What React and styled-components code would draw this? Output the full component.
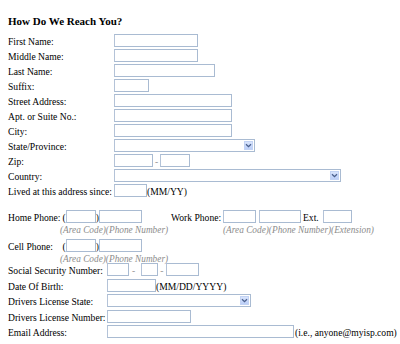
import React from "react";
import styled, { createGlobalStyle } from "styled-components";

const GlobalStyle = createGlobalStyle`
  body {
    margin: 0;
    background: #fff;
    font-family: "Liberation Serif", "Times New Roman", serif;
    color: #000;
  }
`;

const Page = styled.div`
  padding: 14px 8px 0 8px;
  width: 400px;
  box-sizing: border-box;
`;

const Heading = styled.h2`
  margin: 0;
  font-size: 11px;
  line-height: 14px;
  font-weight: bold;
`;

const Section = styled.div`
  display: flex;
  flex-direction: column;
  margin-top: ${(p) => p.$top || 0}px;
`;

const Row = styled.div`
  display: flex;
  align-items: flex-start;
  height: ${(p) => p.$h || 15}px;
`;

const Label = styled.div`
  width: ${(p) => p.$w}px;
  flex-shrink: 0;
  font-size: 9.6px;
  line-height: 15px;
  padding-top: 1px;
  white-space: nowrap;
`;

const Text = styled.span`
  font-size: 9.6px;
  line-height: 15px;
  padding-top: 1px;
  margin-left: ${(p) => p.$ml || 0}px;
  margin-right: ${(p) => p.$mr || 0}px;
  color: ${(p) => (p.$muted ? "#999" : "#000")};
  white-space: nowrap;
`;

const Input = styled.div`
  box-sizing: border-box;
  width: ${(p) => p.$w}px;
  height: 13px;
  margin-top: 1px;
  flex-shrink: 0;
  border: 1px solid #a9bbd2;
  border-left-color: #b4c3d8;
  background: #fff;
`;

const SelectBox = styled(Input)`
  display: flex;
  justify-content: flex-end;
  align-items: center;
  padding-right: 1px;
`;

const SelectButton = styled.div`
  width: 9px;
  height: 9px;
  background: linear-gradient(#d8e4fc, #bccff8);
  border: 1px solid #c3d3f4;
  box-sizing: border-box;
  display: flex;
  align-items: center;
  justify-content: center;
`;

const PhoneGrid = styled.div`
  display: grid;
  grid-template-columns: 52px 111px 52px auto;
  margin-top: 11px;
`;

const Cell = styled.div`
  display: flex;
  align-items: flex-start;
  grid-column: ${(p) => p.$col};
  height: ${(p) => p.$h || 15}px;
  margin-bottom: ${(p) => p.$mb || 0}px;
`;

const Hint = styled.div`
  font-size: 9.3px;
  line-height: 10px;
  font-style: italic;
  color: #8c8c8c;
  white-space: nowrap;
  margin-top: 1px;
`;

function Select({ w }) {
  return (
    <SelectBox $w={w}>
      <SelectButton>
        <svg width="7" height="5" viewBox="0 0 7 5">
          <path d="M1 1.2 L3.5 3.6 L6 1.2" fill="none" stroke="#4a5f8c" strokeWidth="1.3" />
        </svg>
      </SelectButton>
    </SelectBox>
  );
}

const addressFields = [
  { label: "First Name:", w: 84 },
  { label: "Middle Name:", w: 84 },
  { label: "Last Name:", w: 101 },
  { label: "Suffix:", w: 35 },
  { label: "Street Address:", w: 118 },
  { label: "Apt. or Suite No.:", w: 118 },
  { label: "City:", w: 118 },
];

export default function App() {
  return (
    <Page>
      <GlobalStyle />
      <Heading>How Do We Reach You?</Heading>

      <Section $top={5}>
        {addressFields.map((f) => (
          <Row key={f.label}>
            <Label $w={106}>{f.label}</Label>
            <Input $w={f.w} />
          </Row>
        ))}
        <Row>
          <Label $w={106}>State/Province:</Label>
          <Select w={141} />
        </Row>
        <Row>
          <Label $w={106}>Zip:</Label>
          <Input $w={39} />
          <Text $muted $ml={2} $mr={2}>-</Text>
          <Input $w={30} />
        </Row>
        <Row>
          <Label $w={106}>Country:</Label>
          <Select w={227} />
        </Row>
        <Row>
          <Label $w={106}>Lived at this address since:</Label>
          <Input $w={33} />
          <Text>(MM/YY)</Text>
        </Row>
      </Section>

      <PhoneGrid>
        <Cell $col="1">
          <Label $w={52}>Home Phone:</Label>
        </Cell>
        <Cell $col="2">
          <Text $ml={2.5}>(</Text>
          <Input $w={30} />
          <Text>)</Text>
          <Input $w={43} />
        </Cell>
        <Cell $col="3">
          <Label $w={52}>Work Phone:</Label>
        </Cell>
        <Cell $col="4">
          <Input $w={33} />
          <Input $w={42} style={{ marginLeft: 3 }} />
          <Text $ml={2} $mr={4}>Ext.</Text>
          <Input $w={29} />
        </Cell>

        <Cell $col="2" $h={10} $mb={4}>
          <Hint>(Area Code)(Phone Number)</Hint>
        </Cell>
        <Cell $col="4" $h={10} $mb={4}>
          <Hint>(Area Code)(Phone Number)(Extension)</Hint>
        </Cell>

        <Cell $col="1">
          <Label $w={52}>Cell Phone:</Label>
        </Cell>
        <Cell $col="2 / span 3">
          <Text $ml={2.5}>(</Text>
          <Input $w={30} />
          <Text>)</Text>
          <Input $w={43} />
        </Cell>

        <Cell $col="2 / span 3" $h={9}>
          <Hint>(Area Code)(Phone Number)</Hint>
        </Cell>
      </PhoneGrid>

      <Section>
        <Row $h={15.5}>
          <Label $w={99}>Social Security Number:</Label>
          <Input $w={22} />
          <Text $muted $ml={3} $mr={6}>-</Text>
          <Input $w={17} />
          <Text $muted $ml={2} $mr={3}>-</Text>
          <Input $w={33} />
        </Row>
        <Row $h={15.5}>
          <Label $w={99}>Date Of Birth:</Label>
          <Input $w={49} />
          <Text>(MM/DD/YYYY)</Text>
        </Row>
        <Row $h={15.5}>
          <Label $w={99}>Drivers License State:</Label>
          <Select w={144} />
        </Row>
        <Row $h={15.5}>
          <Label $w={99}>Drivers License Number:</Label>
          <Input $w={84} />
        </Row>
        <Row $h={15.5}>
          <Label $w={99}>Email Address:</Label>
          <Input $w={187} />
          <Text $ml={1}>(i.e., anyone@myisp.com)</Text>
        </Row>
      </Section>
    </Page>
  );
}
